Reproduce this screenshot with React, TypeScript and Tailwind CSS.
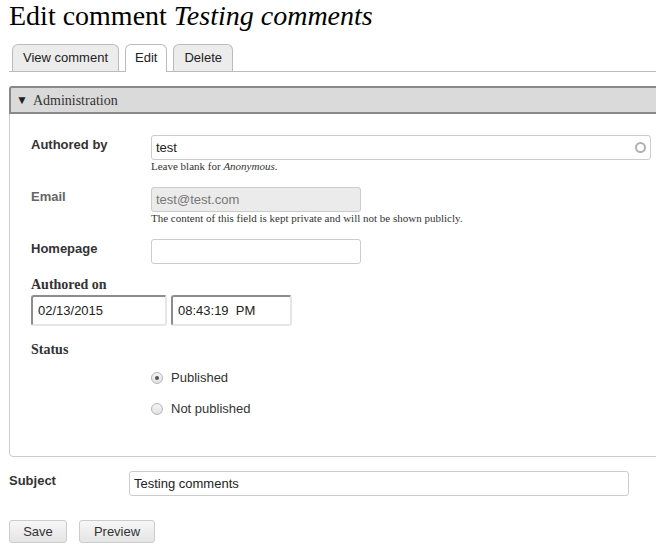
import React from "react"

const sans = "font-['Liberation_Sans',Arial,sans-serif]"
const serif = "font-['Liberation_Serif','Times_New_Roman',serif]"

function Tab({ label, active }: { label: string; active?: boolean }) {
  return (
    <div
      className={
        "flex items-center rounded-t-[6px] border border-b-0 border-[#bbb] text-[13px] text-[#222] " +
        (active ? "-mb-px h-[28px] bg-white px-[9px] pb-px" : "h-[27px] bg-[#ececec] px-[10px]")
      }
    >
      {label}
    </div>
  )
}

function TextBox({ value, width, disabled }: { value?: string; width: string; disabled?: boolean }) {
  return (
    <div
      className={
        "flex h-[25px] items-center rounded-[3px] border border-[#ccc] px-[4px] text-[13px] " +
        width +
        (disabled ? " bg-[#ebebeb] text-[#777]" : " bg-white text-[#222]")
      }
    >
      {value}
    </div>
  )
}

function Radio({ label, checked }: { label: string; checked?: boolean }) {
  return (
    <div className="flex h-[18px] items-center">
      <span className="flex h-[12px] w-[12px] items-center justify-center rounded-full border border-[#b5b5b5] bg-gradient-to-b from-[#f4f4f4] to-[#e2e2e2]">
        {checked && <span className="h-[4px] w-[4px] rounded-full bg-[#555]" />}
      </span>
      <span className="ml-[8px] text-[13px] text-[#333]">{label}</span>
    </div>
  )
}

export default function App() {
  return (
    <div className={`h-[548px] w-full overflow-hidden bg-white text-[#333] ${sans}`}>
      <h1 className={`pl-[9px] text-[28px] leading-[32px] text-black ${serif}`}>
        Edit comment <em>Testing comments</em>
      </h1>

      <div className="ml-[9px] mt-[12px] flex items-end gap-[6px] border-b border-[#bbb] pl-[3px]">
        <Tab label="View comment" />
        <Tab label="Edit" active />
        <Tab label="Delete" />
      </div>

      <div className="ml-[9px] mt-[14px] w-[660px] rounded-[4px] border border-[#ccc]">
        <div className={`-mx-px -mt-px flex h-[28px] items-center rounded-t-[3px] border-2 border-[#888] bg-[#dadada] pl-[5px] text-[14px] text-[#333] ${serif}`}>
          <span className="mr-[5px] text-[12px] text-[#222]">▼</span>
          Administration
        </div>

        <div className="pb-[38px] pl-[21px] pt-[21px]">
          <div className="flex">
            <div className="w-[120px] pt-[2px] text-[13px] font-bold leading-[16px]">Authored by</div>
            <div>
              <div className="relative">
                <TextBox value="test" width="w-[500px]" />
                <span className="absolute right-[5px] top-[7px] h-[11px] w-[11px] rounded-full border-2 border-[#b0b0b0]" />
              </div>
              <div className={`text-[11px] leading-[13px] text-[#333] ${serif}`}>
                Leave blank for <em>Anonymous</em>.
              </div>
            </div>
          </div>

          <div className="mt-[14px] flex">
            <div className="w-[120px] pt-[2px] text-[13px] font-bold leading-[16px] text-[#666]">Email</div>
            <div>
              <TextBox value="test@test.com" width="w-[210px]" disabled />
              <div className={`text-[11px] leading-[13px] text-[#333] ${serif}`}>
                The content of this field is kept private and will not be shown publicly.
              </div>
            </div>
          </div>

          <div className="mt-[14px] flex">
            <div className="w-[120px] pt-[2px] text-[13px] font-bold leading-[16px]">Homepage</div>
            <TextBox width="w-[210px]" />
          </div>

          <div className={`mt-[13px] text-[14px] font-bold leading-[16px] ${serif}`}>Authored on</div>
          <div className="mt-[2px] flex gap-[4px]">
            <div className="flex h-[31px] w-[136px] items-center rounded-[3px] border-2 border-b-[#e6e6e6] border-l-[#8d8d8d] border-r-[#e6e6e6] border-t-[#8d8d8d] px-[5px] text-[13px] text-[#222]">
              02/13/2015
            </div>
            <div className="flex h-[31px] w-[121px] items-center rounded-[3px] border-2 border-b-[#e6e6e6] border-l-[#8d8d8d] border-r-[#e6e6e6] border-t-[#8d8d8d] px-[5px] text-[13px] text-[#222]">
              08:43:19&nbsp; PM
            </div>
          </div>

          <div className={`mt-[16px] text-[14px] font-bold leading-[16px] ${serif}`}>Status</div>
          <div className="ml-[120px] mt-[11px] flex flex-col gap-[13px]">
            <Radio label="Published" checked />
            <Radio label="Not published" />
          </div>
        </div>
      </div>

      <div className="ml-[9px] mt-[14px] flex">
        <div className="w-[120px] pt-[2px] text-[13px] font-bold leading-[16px]">Subject</div>
        <TextBox value="Testing comments" width="w-[500px]" />
      </div>

      <div className="ml-[9px] mt-[24px] flex gap-[12px]">
        <button className="h-[23px] w-[58px] rounded-[3px] border border-[#ccc] bg-gradient-to-b from-[#f7f7f7] to-[#e4e4e4] text-[13px] text-[#333]">
          Save
        </button>
        <button className="h-[23px] w-[76px] rounded-[3px] border border-[#ccc] bg-gradient-to-b from-[#f7f7f7] to-[#e4e4e4] text-[13px] text-[#333]">
          Preview
        </button>
      </div>
    </div>
  )
}
